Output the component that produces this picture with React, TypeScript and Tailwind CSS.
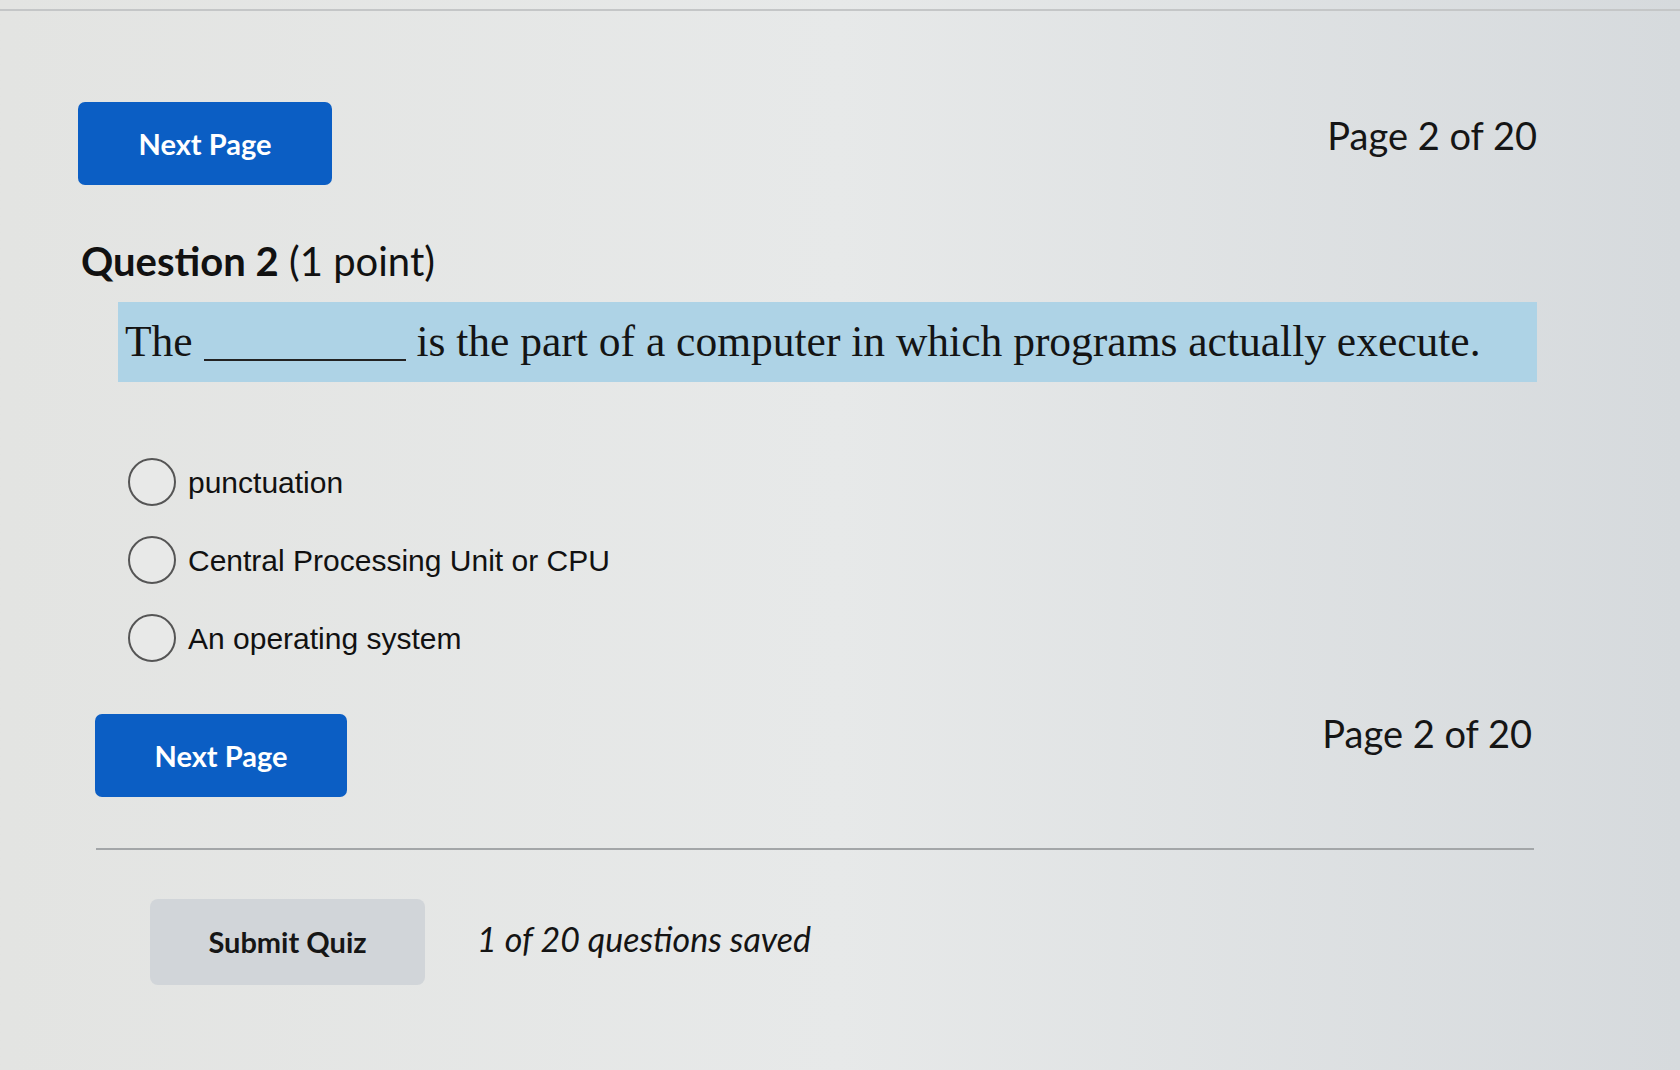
import React from "react";

const lato = { fontFamily: "Lato, 'Open Sans', sans-serif" };

const options = ["punctuation", "Central Processing Unit or CPU", "An operating system"];

export default function App() {
  return (
    <div className="w-[1680px] h-[1070px] overflow-hidden bg-gradient-to-r from-[#e3e4e2] via-[#e7e9e9] to-[#d6dadd]">
      <div className="pt-[9px]">
        <div className="h-[2px] bg-[#c4c6c7]" />
      </div>
      <div className="pl-[78px] pr-[143px] pt-[91px]">
        {/* Top nav row */}
        <div className="flex items-start justify-between">
          <button
            className="w-[254px] h-[83px] rounded-[7px] bg-[#0b5ec4] text-white font-bold text-[29px] flex items-center justify-center"
            style={lato}
          >
            Next Page
          </button>
          <div className="mt-[14px] text-[38px] leading-none text-[#151515]" style={lato}>
            Page 2 of 20
          </div>
        </div>

        {/* Question heading */}
        <h2 className="mt-[56px] ml-[3px] text-[40px] leading-none text-[#111]" style={lato}>
          <span className="font-bold">Question 2</span> <span>(1 point)</span>
        </h2>

        {/* Question stem */}
        <div
          className="mt-[21px] ml-[40px] h-[80px] bg-[#aed3e6] flex items-center pl-[7px] text-[43.5px] text-[#141414]"
          style={{ fontFamily: "'Liberation Serif', 'Times New Roman', serif" }}
        >
          <span>
            The <span className="inline-block w-[202px] border-b-2 border-[#222] align-[-5px]" /> is the part of a computer in which programs actually execute.
          </span>
        </div>

        {/* Options */}
        <div className="mt-[76px] ml-[50px] flex flex-col gap-[30px]">
          {options.map((o) => (
            <label key={o} className="flex items-center gap-[12px]">
              <span className="w-[48px] h-[48px] rounded-full border-2 border-[#555] bg-[#e8e9e8] shrink-0" />
              <span
                className="text-[30px] text-[#111]"
                style={{ fontFamily: "'Liberation Sans', Arial, sans-serif" }}
              >
                {o}
              </span>
            </label>
          ))}
        </div>

        {/* Bottom nav row */}
        <div className="mt-[52px] flex items-start justify-between">
          <button
            className="ml-[17px] w-[252px] h-[83px] rounded-[7px] bg-[#0b5ec4] text-white font-bold text-[29px] flex items-center justify-center"
            style={lato}
          >
            Next Page
          </button>
          <div className="mt-[0px] mr-[5px] text-[38px] leading-none text-[#151515]" style={lato}>
            Page 2 of 20
          </div>
        </div>

        {/* Divider */}
        <div className="mt-[51px] ml-[18px] mr-[3px] h-[2px] bg-[#a3a6a8]" />

        {/* Submit row */}
        <div className="mt-[49px] ml-[72px] flex items-center gap-[52px]">
          <button
            className="w-[275px] h-[86px] rounded-[8px] bg-[#d1d5d9] text-[#161616] font-bold text-[29px] flex items-center justify-center"
            style={lato}
          >
            Submit Quiz
          </button>
          <span className="italic text-[34px] text-[#141414] -mt-[8px]" style={lato}>
            1 of 20 questions saved
          </span>
        </div>
      </div>
    </div>
  );
}
